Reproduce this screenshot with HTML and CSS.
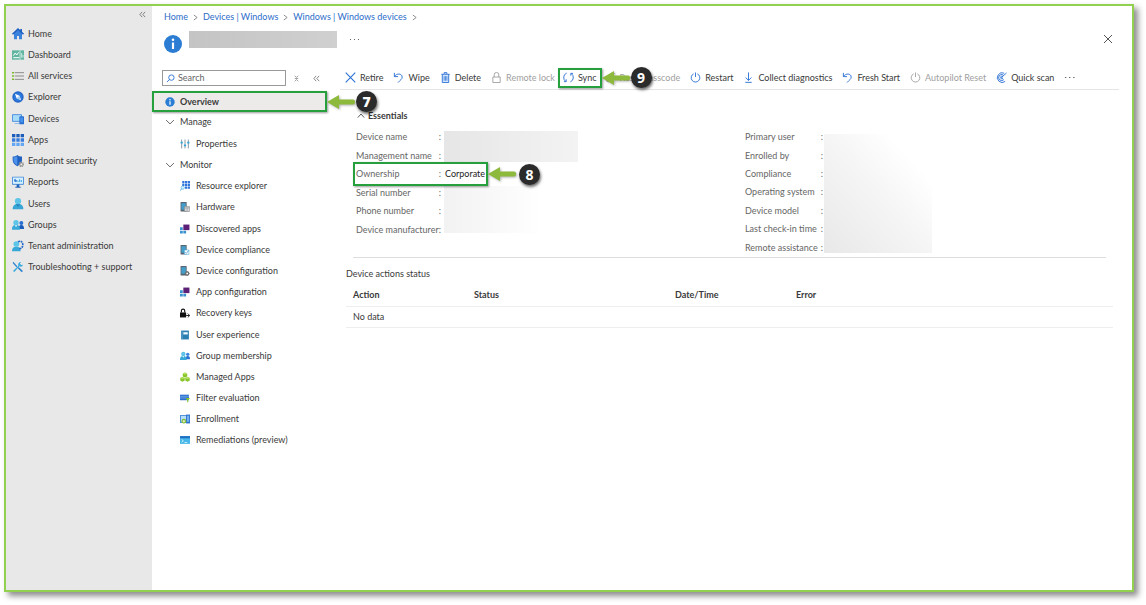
FILE: index.html
```html
<!DOCTYPE html>
<html lang="en">
<head>
    <meta charset="UTF-8">
    <meta name="viewport" content="width=device-width, initial-scale=1.0">
    <title>Windows devices - Overview</title>
    <link rel="stylesheet" href="styles.css">
</head>
<body>
    <div class="portal">
        <nav class="sidebar" aria-label="Main menu">
            <button type="button" class="collapse" aria-label="Collapse menu">
                <svg class="icon-tiny" viewBox="0 0 8 8"><path d="M3.6 1 1 4l2.6 3M7 1 4.4 4 7 7" fill="none" stroke="#666" stroke-width=".9"/></svg>
            </button>
            <ul class="nav-list">
                <li><a href="#"><svg viewBox="0 0 18 18"><path d="M3 8v9h4.500v-5h3v5H15V8L9 2.500z" fill="#3b82dd"/><path d="M9 0 0 8.600l1.500 1.600L9 3.500l7.500 6.700L18 8.600l-3-2.900V1.500h-2.500v1.900z" fill="#1a5fc0"/></svg>Home</a></li>
                <li><a href="#"><svg viewBox="0 0 18 18"><rect y="2" width="18" height="14" fill="#5fb5a0"/><path d="M2 13h9M2 10l3-4 2 3 3-4" stroke="#fff" stroke-width="1.500" fill="none"/><path d="M12 2v14M14.500 13V6M16.500 13V9" stroke="#e4f5ef" stroke-width="1.200"/></svg>Dashboard</a></li>
                <li><a href="#"><svg viewBox="0 0 18 18"><path d="M4 4h14M4 9h14M4 14h14" stroke="#8c8c8c" stroke-width="1.500"/><path d="M0 4h3M0 9h3M0 14h3" stroke="#7fba2c" stroke-width="2.200"/></svg>All services</a></li>
                <li><a href="#"><svg viewBox="0 0 18 18"><circle cx="9" cy="9" r="8.500" fill="#2468c8"/><circle cx="9" cy="9" r="6" fill="#2e7be0"/><path d="m4.500 4 6.700 3 2.300 6.700-6.600-3z" fill="#fff"/><path d="m11.200 7-4.300 3.700 6.600 3z" fill="#a8cef5"/></svg>Explorer</a></li>
                <li><a href="#"><svg viewBox="0 0 18 18"><rect y="2" width="15" height="11" rx="1" fill="#3f86dc"/><rect x="1.200" y="3.200" width="12.600" height="8.600" fill="#a7dcf8"/><path d="M4 15h7v1.500H4z" fill="#8dbfea"/><rect x="11" y="5" width="7" height="12" rx="1" fill="#2a70d3"/><path d="M12.500 7h4v7h-4z" fill="#4593ec"/></svg>Devices</a></li>
                <li><a href="#"><svg viewBox="0 0 18 18"><path d="M0 0h5v5H0zM6.500 0h5v5h-5zM13 0h5v5h-5z" fill="#1c5dbb"/><path d="M0 6.500h5v5H0zM6.500 6.500h5v5h-5zM13 6.500h5v5h-5z" fill="#347bdd"/><path d="M0 13h5v5H0zM6.500 13h5v5h-5zM13 13h5v5h-5z" fill="#62a6f4"/></svg>Apps</a></li>
                <li><a href="#"><svg viewBox="0 0 18 18"><path d="M8 0c2 1.700 4 2.200 7 2.200V8c0 4.500-4 7.500-7 9C5 15.500 1 12.500 1 8V2.200C4 2.200 6 1.700 8 0z" fill="#2260bf"/><path d="M8 1.500V15.500C5 14 2.200 11.500 2.200 8V3.400C4.500 3.300 6.500 2.600 8 1.500z" fill="#4c91eb"/><circle cx="14" cy="14" r="3" fill="#ccc" stroke="#888" stroke-width="2" stroke-dasharray="1.600 .8"/><circle cx="14" cy="14" r="1.800" fill="#f4f4f4" stroke="#888"/></svg>Endpoint security</a></li>
                <li><a href="#"><svg viewBox="0 0 18 18"><path d="M7 12h4v4h2v1.500H5V16h2z" fill="#2262b9"/><rect y="1" width="18" height="12" rx="1" fill="#3b83d4"/><path d="M1.200 2.200h15.600v9.600H1.200z" fill="#d6f0ff"/><path d="M5.500 4a2.500 2.500 0 1 0 2.500 2.500H5.500z" fill="#2f77d2"/><path d="M9 9V7M11.500 9V5M14 9V6" stroke="#3aa3dd" stroke-width="1.500"/></svg>Reports</a></li>
                <li><a href="#"><svg viewBox="0 0 18 18"><path d="M1 17c0-5 2-8 8-8s8 3 8 8z" fill="#37a5d5"/><circle cx="9" cy="4.700" r="4.700" fill="#5ec4e8"/><path d="m6 9.200 3 4 3-4z" fill="#2384b7"/></svg>Users</a></li>
                <li><a href="#"><svg viewBox="0 0 18 18"><path d="M10 15c0-4 1-6 4-6s4 2 4 6z" fill="#1c5dbb"/><circle cx="14" cy="6" r="3" fill="#2970d5"/><path d="M0 16c0-4 1-7 6-7s6 3 6 7z" fill="#38a8d8"/><circle cx="6" cy="5.500" r="4" fill="#5ec4e8"/><path d="m4 9.200 2 3 2-3z" fill="#d7f2fb"/></svg>Groups</a></li>
                <li><a href="#"><svg viewBox="0 0 18 18"><path d="M0 17c0-5 2-7 6.500-7s6.500 2 6.500 7z" fill="#38a8d8"/><circle cx="6.500" cy="6" r="4.300" fill="#5ec4e8"/><path d="M9 2.500c5-2 7.500 1 7.200 5.500-.4 3-2.500 5-5.200 5" stroke="#2468c8" stroke-width="2.500" fill="none" stroke-dasharray="3 1"/></svg>Tenant administration</a></li>
                <li><a href="#"><svg viewBox="0 0 18 18"><path d="m2 1 6 7-1.500 1.500L1 3zM10 9l6.500 6-2 2L8.500 11z" fill="#3386d2"/><path d="M16.500 5.500A4 4 0 0 1 11 8L3.500 16.500 1.500 15 9.500 7a4 4 0 0 1 4-5.500L11.700 4l2.300 2z" fill="#36a9df"/></svg>Troubleshooting + support</a></li>
            </ul>
        </nav>

        <main class="main">
            <nav class="breadcrumb" aria-label="Breadcrumb">
                <a href="#">Home</a><svg viewBox="0 0 6 8"><path d="m1 1 4 3-4 3" fill="none" stroke="#777"/></svg>
                <a href="#">Devices | Windows</a><svg viewBox="0 0 6 8"><path d="m1 1 4 3-4 3" fill="none" stroke="#777"/></svg>
                <a href="#">Windows | Windows devices</a><svg viewBox="0 0 6 8"><path d="m1 1 4 3-4 3" fill="none" stroke="#777"/></svg>
            </nav>
            <header class="title-bar">
                <svg class="icon-info" viewBox="0 0 18 18"><circle cx="9" cy="9" r="9" fill="#2b7cd3"/><circle cx="9" cy="4.800" r="1.300" fill="#fff"/><path d="M9 7.500v6.500" stroke="#fff" stroke-width="2.200"/></svg>
                <div class="device-title"></div>
                <button type="button" class="title-more" aria-label="More"><svg viewBox="0 0 9 9"><path d="M0 4.500h1M4 4.500h1M8 4.500h1" stroke="#666"/></svg></button>
                <button type="button" class="close" aria-label="Close">
                    <svg viewBox="0 0 10 10"><path d="m1 1 8 8M9 1 1 9" stroke="#555" fill="none"/></svg>
                </button>
            </header>

            <div class="workspace">
                <aside class="menu">
                    <div class="search-row">
                        <label class="search">
                            <svg viewBox="0 0 10 10"><circle cx="6" cy="4" r="3" fill="none" stroke="#2b6fd0"/><path d="M4 6 1 9" stroke="#2b6fd0"/></svg>
                            <input type="text" placeholder="Search" aria-label="Search">
                        </label>
                        <button type="button" aria-label="Expand all">
                            <svg class="icon-tiny" viewBox="0 0 8 8"><path d="m2 .8 2 2 2-2M2 7.200l2-2 2 2M2 4h4" fill="none" stroke="#777" stroke-width=".8"/></svg>
                        </button>
                        <button type="button" aria-label="Collapse">
                            <svg class="icon-tiny" viewBox="0 0 8 8"><path d="M3.600 1 1 4l2.600 3M7 1 4.400 4 7 7" fill="none" stroke="#666" stroke-width=".9"/></svg>
                        </button>
                    </div>
                    <ul class="menu-list">
                        <li class="selected"><a href="#"><svg viewBox="0 0 18 18"><circle cx="9" cy="9" r="8.500" fill="#2b7cd3"/><circle cx="9" cy="4.800" r="1.400" fill="#fff"/><path d="M9 7.500v6.500" stroke="#fff" stroke-width="2.200"/></svg>Overview</a>
                            <span class="callout"><svg viewBox="0 0 28 16"><path d="M0 8 12 1v4.500h14a2 2 0 0 1 2 2v1a2 2 0 0 1-2 2H12V15z" fill="#8db93c"/></svg><b>7</b></span>
                        </li>
                        <li class="group"><a href="#"><svg viewBox="0 0 18 18"><path d="m2 5.500 7 7 7-7" fill="none" stroke="#555" stroke-width="1.600"/></svg>Manage</a></li>
                        <li class="sub"><a href="#"><svg viewBox="0 0 18 18"><path d="M3 1v16M9 1v16M15 1v16" stroke="#84949f" stroke-width="1.700"/><path d="M1 5h4v3H1zM7 10h4v3H7zM13 5h4v3h-4z" fill="#36a4d6"/></svg>Properties</a></li>
                        <li class="group"><a href="#"><svg viewBox="0 0 18 18"><path d="m2 5.500 7 7 7-7" fill="none" stroke="#555" stroke-width="1.600"/></svg>Monitor</a></li>
                        <li class="sub"><a href="#"><svg viewBox="0 0 18 18"><path d="M4 0h4v4H4zM9 0h4v4H9zM14 0h4v4h-4zM4 5h4v4H4zM9 5h4v4H9zM14 5h4v4h-4zM9 10h4v4H9zM14 10h4v4h-4z" fill="#2f75dc"/><circle cx="5" cy="12" r="3" fill="#d8f2ff" stroke="#45a9df"/><path d="m3 14-3 3.500" stroke="#45a9df" stroke-width="1.700"/></svg>Resource explorer</a></li>
                        <li class="sub"><a href="#"><svg viewBox="0 0 18 18"><rect x="1" width="11" height="17" rx="1" fill="#59656e"/><path d="M2.500 2h8v12h-8z" fill="#459dca"/><path d="M8 8h9v9H8z" fill="#eef1f3" stroke="#777"/><path d="M8 10.500h9M11 10v7M14 10v7" stroke="#777"/></svg>Hardware</a></li>
                        <li class="sub"><a href="#"><svg viewBox="0 0 18 18"><path d="M6 1h11v10H6z" fill="#5c2077"/><path d="M0 6h5v5H0zM0 12h5v5H0zM6 12h5v5H6z" fill="#3a91cf"/></svg>Discovered apps</a></li>
                        <li class="sub"><a href="#"><svg viewBox="0 0 18 18"><rect x="1" width="11" height="17" rx="1" fill="#59656e"/><path d="M2.500 2h8v12h-8z" fill="#459dca"/><path d="M8 9h8v8H8z" fill="#fff" stroke="#48a8db"/><path d="m9.500 13 2 2 4-5" fill="none" stroke="#2b8bc9" stroke-width="1.300"/></svg>Device compliance</a></li>
                        <li class="sub"><a href="#"><svg viewBox="0 0 18 18"><rect x="1" width="11" height="17" rx="1" fill="#59656e"/><path d="M2.500 2h8v12h-8z" fill="#459dca"/><circle cx="13" cy="13.500" r="3" fill="#fff" stroke="#666" stroke-width="2"/><path d="M13 9v9M8.500 13.500h9" stroke="#666"/><circle cx="13" cy="13.500" r="1.500" fill="#fff"/></svg>Device configuration</a></li>
                        <li class="sub"><a href="#"><svg viewBox="0 0 18 18"><path d="M6 1h11v10H6z" fill="#5c2077"/><path d="M0 6h5v5H0zM0 12h5v5H0zM6 12h5v5H6z" fill="#3a91cf"/></svg>App configuration</a></li>
                        <li class="sub"><a href="#"><svg viewBox="0 0 18 18"><path d="M0 8h11v9H0z" fill="#111"/><path d="M2.500 8V5a3 3 0 0 1 6 0v3" fill="none" stroke="#111" stroke-width="2"/><path d="M11 13.500h6M14 10l3.500 3.500L14 17" fill="none" stroke="#111" stroke-width="1.600"/></svg>Recovery keys</a></li>
                        <li class="sub"><a href="#"><svg viewBox="0 0 18 18"><path d="M2 1h14v16H2z" fill="#2c7db0"/><path d="M4 1v16" stroke="#73b5d9"/><path d="M6 4h8v4H6z" fill="#eef8fd"/></svg>User experience</a></li>
                        <li class="sub"><a href="#"><svg viewBox="0 0 18 18"><path d="M10 15c0-4 1-6 4-6s4 2 4 6z" fill="#2871d3"/><circle cx="14" cy="6" r="3" fill="#3a82e2"/><path d="M0 16c0-4 1-7 6-7s6 3 6 7z" fill="#38a8d8"/><circle cx="6" cy="5.500" r="4" fill="#5ec4e8"/><path d="m4 9.200 2 3 2-3z" fill="#d7f2fb"/></svg>Group membership</a></li>
                        <li class="sub"><a href="#"><svg viewBox="0 0 18 18"><path d="m9 1 4 2v5L9 10 5 8V3zM4.500 9l4 2v4.500l-4 2-4-2V11zM13.500 9l4 2v4.500l-4 2-4-2V11z" fill="#88c52b"/><path d="m9 1 4 2-4 2-4-2zM4.500 9l4 2-4 2-4-2zM13.500 9l4 2-4 2-4-2z" fill="#b4e35d"/></svg>Managed Apps</a></li>
                        <li class="sub"><a href="#"><svg viewBox="0 0 18 18"><path d="M0 3h16v10H0z" fill="#2d70cd"/><path d="M0 6h16M0 9h12" stroke="#83b5ef" stroke-width="1.200"/><path d="M10 9h8l-3 4v3l-2 1v-4z" fill="#88c52b"/></svg>Filter evaluation</a></li>
                        <li class="sub"><a href="#"><svg viewBox="0 0 18 18"><path d="M0 2h14v14H0z" fill="#3983d9"/><path d="M1.500 3.500h10v11h-10z" fill="#b7e0f8"/><path d="M11 1h7v16h-7z" fill="#2d72d0"/><path d="M12.500 3h4v11h-4z" fill="#75afee"/><circle cx="7" cy="13" r="4.300" fill="#80bc32"/><path d="M7 10.700v4.600M4.700 13h4.600" stroke="#fff" stroke-width="1.400"/></svg>Enrollment</a></li>
                        <li class="sub"><a href="#"><svg viewBox="0 0 18 18"><path d="M0 2h18v14H0z" fill="#48b8ea"/><path d="M0 2h18v4H0z" fill="#2071c4"/><path d="m3 8 3 2.500L3 13M8 13.500h5" fill="none" stroke="#e6f8ff" stroke-width="1.400"/></svg>Remediations (preview)</a></li>
                    </ul>
                </aside>

                <section class="content">
                    <div class="toolbar">
                        <button type="button"><svg viewBox="0 0 12 12"><path d="m.8.8 10.400 10.400M11.200.8.8 11.200" stroke="#2b70d4" stroke-width="1.200" fill="none"/></svg>Retire</button>
                        <button type="button"><svg viewBox="0 0 12 12"><path d="M1.500 1v4h4M1.500 5C4 1 10 1.500 10 5.500c0 2.500-2 3-4.500 6" stroke="#2b70d4" fill="none"/></svg>Wipe</button>
                        <button type="button"><svg viewBox="0 0 12 12"><path d="M1.500 2.500h9M4.500 2V.700h3V2M2.500 2.500v9h7v-9" stroke="#2b70d4" fill="#d4e6fb"/><path d="M4.500 4.500v5M6 4.500v5M7.500 4.500v5" stroke="#2b70d4" stroke-width=".8"/></svg>Delete</button>
                        <button type="button" disabled><svg viewBox="0 0 12 12"><path d="M2 5.500h8v6H2zM3.500 5.500V3a2.500 2.500 0 0 1 5 0v2.500" stroke="#a0a0a0" fill="none"/></svg>Remote lock</button>
                        <button type="button" class="marked"><svg viewBox="0 0 12 12"><path d="M4 1.200A5.200 5.200 0 0 0 3 10.300M1 10.500h2.500V8M8 10.800A5.200 5.200 0 0 0 9 1.700M11 1.500H8.500V4" stroke="#2b70d4" fill="none"/></svg>Sync
                            <span class="callout"><svg viewBox="0 0 28 16"><path d="M0 8 12 1v4.500h14a2 2 0 0 1 2 2v1a2 2 0 0 1-2 2H12V15z" fill="#8db93c"/></svg><b>9</b></span>
                        </button>
                        <button type="button" disabled><svg viewBox="0 0 12 12"><circle cx="4" cy="8" r="2.700" stroke="#a0a0a0" fill="none"/><path d="m6 6 4.500-4.500M8.500 3.500 10 5" stroke="#a0a0a0"/></svg>Reset passcode</button>
                        <button type="button"><svg viewBox="0 0 12 12"><path d="M4 2a4.700 4.700 0 1 0 4 0M6 .500V5.500" stroke="#2b70d4" fill="none"/></svg>Restart</button>
                        <button type="button"><svg viewBox="0 0 12 12"><path d="M6 .500v8.500M2.800 6 6 9.200 9.200 6M2.500 11.300h7" stroke="#2b70d4" fill="none"/></svg>Collect diagnostics</button>
                        <button type="button"><svg viewBox="0 0 12 12"><path d="M1.500 1v4h4M1.500 5C4 1 10 1.500 10 5.500c0 2.500-2 3-4.500 6" stroke="#2b70d4" fill="none"/></svg>Fresh Start</button>
                        <button type="button" disabled><svg viewBox="0 0 12 12"><path d="M4 2a4.700 4.700 0 1 0 4 0M6 .500V5.500" stroke="#a0a0a0" fill="none"/></svg>Autopilot Reset</button>
                        <button type="button"><svg viewBox="0 0 12 12"><path d="M9 1.300A5.300 5.300 0 1 0 10 10.300M8 3.300a3.300 3.300 0 1 0 .6 5M7.500 5a1.500 1.500 0 1 0 0 2L6 6l5.500-5" stroke="#2b70d4" fill="none"/></svg>Quick scan</button>
                        <button type="button" class="more" aria-label="More commands"><svg viewBox="0 0 12 12"><path d="M1 6h1.500M5.500 6H7M10 6h1.500" stroke="#666" stroke-width="1.200"/></svg></button>
                    </div>

                    <div class="essentials">
                        <button type="button" class="essentials-toggle"><svg viewBox="0 0 10 10"><path d="m1 7 4-4.500L9 7" fill="none" stroke="#333"/></svg>Essentials</button>
                        <div class="properties">
                            <dl class="props-left">
                                <dt>Device name</dt>
                                <dd class="masked masked-name"></dd>
                                <dt>Management name</dt>
                                <dt class="ownership">Ownership
                                    <span class="mark"><span class="callout"><svg viewBox="0 0 28 16"><path d="M0 8 12 1v4.500h14a2 2 0 0 1 2 2v1a2 2 0 0 1-2 2H12V15z" fill="#8db93c"/></svg><b>8</b></span></span>
                                </dt>
                                <dd>Corporate</dd>
                                <dt>Serial number</dt>
                                <dd class="masked masked-serial"></dd>
                                <dt>Phone number</dt>
                                <dt>Device manufacturer</dt>
                            </dl>
                            <dl class="props-right">
                                <dt>Primary user</dt>
                                <dd class="masked masked-user"></dd>
                                <dt>Enrolled by</dt>
                                <dt>Compliance</dt>
                                <dt>Operating system</dt>
                                <dt>Device model</dt>
                                <dt>Last check-in time</dt>
                                <dt>Remote assistance</dt>
                            </dl>
                        </div>
                    </div>

                    <div class="actions-status">
                        <h2>Device actions status</h2>
                        <table>
                            <thead>
                                <tr>
                                    <th class="col-action">Action</th>
                                    <th class="col-status">Status</th>
                                    <th class="col-date">Date/Time</th>
                                    <th>Error</th>
                                </tr>
                            </thead>
                            <tbody>
                                <tr><td colspan="4">No data</td></tr>
                            </tbody>
                        </table>
                    </div>
                </section>
            </div>
        </main>
    </div>
</body>
</html>
```
FILE: styles.css
```css
* {
    box-sizing: border-box;
}
body {
    margin: 0;
    padding: 4px 12px 13px 4px;
    background-color: #fff;
    color: #3a3a3a;
    font-family: Lato, "Open Sans", sans-serif;
    font-size: 9px;
    line-height: 12px;
}
ul, dl, dd {
    margin: 0;
    padding: 0;
    list-style: none;
}
a {
    color: inherit;
    text-decoration: none;
}
button {
    padding: 0;
    border: none;
    background: none;
    color: inherit;
    font: inherit;
    cursor: pointer;
}
svg {
    display: block;
    flex: none;
}
.portal {
    display: flex;
    min-height: calc(100vh - 17px);
    border: 2px solid #92d050;
    box-shadow: 4px 4px 6px rgba(0, 0, 0, 0.45);
}

/* Left navigation */
.sidebar {
    flex: none;
    width: 146px;
    background-color: #e8e8e8;
}
.collapse {
    display: flex;
    align-items: center;
    height: 17px;
    margin-left: auto;
    padding-right: 6px;
}
.icon-tiny {
    width: 7px;
    height: 7px;
}
.nav-list {
    display: grid;
    grid-auto-rows: 1fr;
    height: 255px;
}
.nav-list a {
    display: flex;
    align-items: center;
    gap: 4px;
    height: 100%;
    padding-left: 6px;
}
.nav-list svg {
    width: 12px;
    height: 12px;
}

/* Page header */
.main {
    flex: 1;
    min-width: 0;
}
.breadcrumb {
    display: flex;
    align-items: center;
    gap: 5px;
    height: 22px;
    padding-left: 12px;
}
.breadcrumb a {
    color: #2b6cc9;
}
.breadcrumb svg {
    width: 5px;
    height: 7px;
}
.title-bar {
    display: flex;
    align-items: center;
    height: 32px;
    padding: 0 19px 0 12px;
}
.icon-info {
    width: 18px;
    height: 18px;
    margin-right: 7px;
}
.device-title {
    width: 148px;
    height: 17px;
    margin-bottom: 10px;
    background: linear-gradient(to right, #c4c4c4, #d0d0d0);
}
.title-more {
    margin: 0 auto 10px 13px;
}
.title-more svg {
    width: 9px;
    height: 9px;
}
.close {
    margin-bottom: 10px;
}
.close svg {
    width: 10px;
    height: 10px;
}
.workspace {
    display: flex;
    padding-top: 6px;
}

/* Device menu */
.menu {
    flex: none;
    width: 188px;
}
.search-row {
    display: flex;
    align-items: center;
    gap: 13px;
    height: 24px;
    margin-bottom: 1px;
    padding-left: 10px;
}
.search {
    display: flex;
    align-items: center;
    gap: 3px;
    width: 124px;
    height: 16px;
    margin-right: -6px;
    padding-left: 3px;
    border: 1px solid #999;
}
.search svg {
    flex: none;
    width: 9px;
    height: 9px;
}
.search input {
    flex: 1;
    min-width: 0;
    padding: 0;
    border: none;
    outline: none;
    background: none;
    font: inherit;
}
.search input::placeholder {
    color: #666;
}
.menu-list {
    display: grid;
    grid-auto-rows: 1fr;
    width: 175px;
    height: 360px;
}
.menu-list a {
    display: flex;
    align-items: center;
    gap: 5px;
    height: 100%;
    padding-left: 13px;
}
.menu-list svg {
    width: 10px;
    height: 10px;
}
.menu-list .sub a {
    gap: 6px;
    padding-left: 28px;
}
.menu-list .group a {
    padding-bottom: 1px;
}
.selected {
    position: relative;
    border: 2px solid #26a03c;
    background-color: #edebe9;
    box-shadow: 1px 1px 2px rgba(0, 0, 0, 0.4);
    font-weight: 700;
}
.menu-list .selected a {
    padding-left: 11px;
}

/* Numbered arrows */
.callout {
    position: absolute;
    z-index: 1;
    top: 50%;
    left: 100%;
    display: flex;
    align-items: center;
    gap: 1px;
    height: 22px;
    margin: -11px 0 0 2px;
}
.callout svg,
.toolbar .callout svg {
    width: 28px;
    height: 16px;
    filter: drop-shadow(1px 1px 1px rgba(0, 0, 0, 0.3));
}
.menu-list .callout svg {
    width: 28px;
    height: 16px;
}
.callout b {
    width: 21px;
    height: 21px;
    border-radius: 50%;
    background-color: #2b2b2b;
    box-shadow: 1px 2px 3px rgba(0, 0, 0, 0.6);
    color: #fff;
    font-family: "Open Sans", sans-serif;
    font-size: 14px;
    line-height: 21px;
    text-align: center;
}

/* Commands */
.content {
    flex: 1;
    min-width: 0;
    margin-right: 13px;
}
.toolbar {
    display: flex;
    align-items: center;
    gap: 10px;
    height: 24px;
    padding-left: 5px;
    border-bottom: 1px solid #e5e5e5;
}
.toolbar button {
    display: flex;
    align-items: center;
    gap: 4px;
    white-space: nowrap;
}
.toolbar svg {
    width: 11px;
    height: 11px;
}
.toolbar button:disabled {
    color: #a0a0a0;
    cursor: default;
}
.toolbar .marked {
    position: relative;
    height: 20px;
    margin: 0 -7px;
    padding: 0 3px;
    border: 2px solid #26a03c;
    box-shadow: 1px 1px 2px rgba(0, 0, 0, 0.4);
}

/* Essentials */
.essentials {
    margin: 0 13px;
    padding: 20px 0 0 3px;
    border-bottom: 1px solid #ddd;
}
.essentials-toggle {
    display: flex;
    align-items: center;
    gap: 3px;
    height: 12px;
    padding-left: 1px;
    font-weight: 700;
}
.essentials-toggle svg {
    width: 8px;
    height: 8px;
}
.properties {
    display: grid;
    grid-template-columns: 389px 1fr;
    align-items: start;
    padding-top: 6px;
    color: #666;
}
.properties dl {
    display: grid;
    grid-auto-rows: 1fr;
    align-items: center;
}
.props-left {
    grid-template-columns: 88px 134px;
    height: 111px;
}
.props-right {
    grid-template-columns: 79px 108px;
    height: 129px;
}
.properties dt {
    display: flex;
    grid-column: 1;
    justify-content: space-between;
    white-space: nowrap;
}
.properties dt::after {
    content: ":";
}
.props-left dt {
    padding-right: 3px;
}
.props-right dt {
    padding-right: 1px;
}
.properties dd {
    grid-column: 2;
    padding-left: 1px;
    color: #222;
}
.properties .masked {
    align-self: stretch;
}
.masked-name {
    grid-row: 1 / span 2;
    margin: 3px 0;
    background: linear-gradient(to right, #e6e6e6, #f3f3f3);
}
.masked-serial {
    grid-row: 4 / span 3;
    width: 98px;
    margin: 2px 0 6px;
    background: linear-gradient(to right, #f2f2f2, #fff);
}
.masked-user {
    grid-row: 1 / span 7;
    margin: 6px 0 4px;
    background: linear-gradient(to top right, #e8e8e8, #f5f5f6 50%, #fff 80%);
}
.ownership {
    position: relative;
}
.mark {
    position: absolute;
    top: -6px;
    left: -3px;
    width: 135px;
    height: 24px;
    border: 2px solid #26a03c;
    box-shadow: 1px 1px 2px rgba(0, 0, 0, 0.4);
}
.mark .callout {
    gap: 3px;
}

/* Device actions */
.actions-status {
    margin: 10px 6px 0;
}
.actions-status h2 {
    margin: 0;
    font-size: 9px;
    font-weight: 400;
    line-height: 12px;
}
.actions-status table {
    width: 100%;
    margin-top: 5px;
    border-collapse: collapse;
    table-layout: fixed;
}
.actions-status th,
.actions-status td {
    height: 21px;
    padding: 0 7px;
    border-bottom: 1px solid #eee;
    text-align: left;
}
.actions-status th {
    font-weight: 700;
}
.col-action, .col-date {
    width: 121px;
}
.col-status {
    width: 201px;
}
```
